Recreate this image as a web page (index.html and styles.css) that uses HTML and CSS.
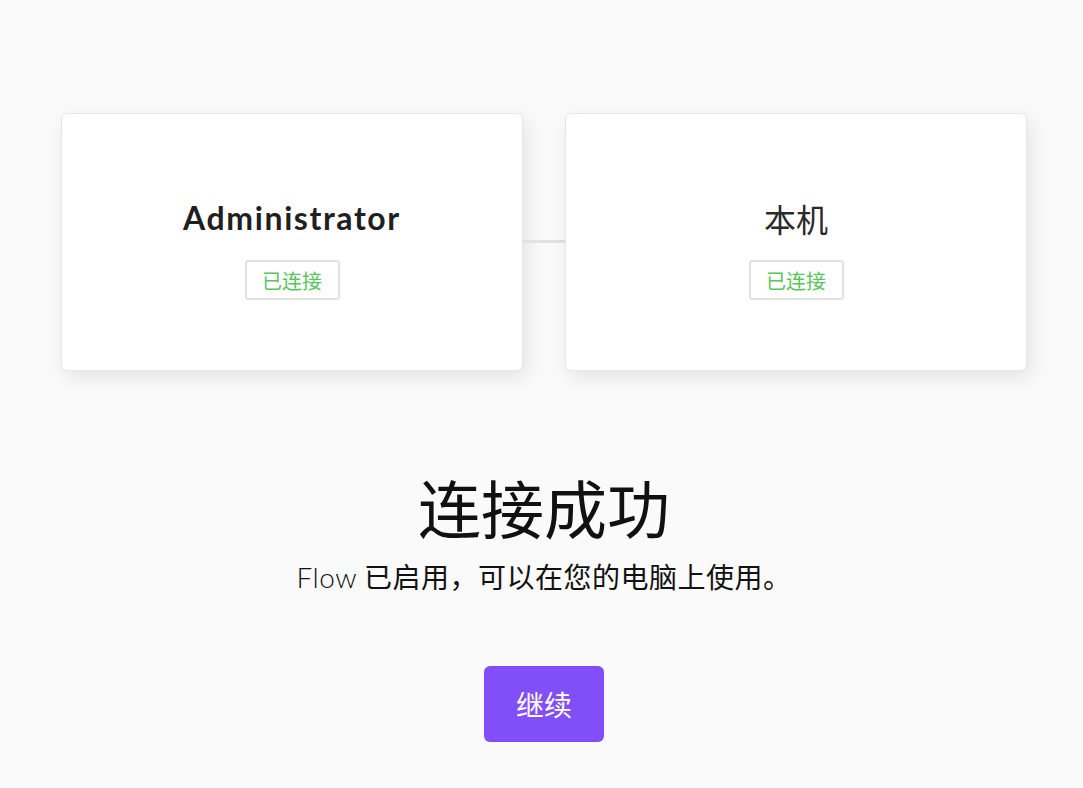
FILE: index.html
```html
<!DOCTYPE html>
<html lang="zh-CN">
<head>
  <meta charset="UTF-8" />
  <meta name="viewport" content="width=device-width, initial-scale=1.0"/>
  <title>Flow</title>
  <link rel="stylesheet" href="styles.css">
</head>
<body>
  <main class="page">
    <section class="devices">
      <div class="device-card">
        <div class="device-name latin">Administrator</div>
        <div class="status">已连接</div>
      </div>
      <div class="link-line"></div>
      <div class="device-card">
        <div class="device-name">本机</div>
        <div class="status">已连接</div>
      </div>
    </section>

    <section class="result">
      <h1 class="result-title">连接成功</h1>
      <p class="result-text"><span class="latin-light">Flow</span> 已启用，可以在您的电脑上使用。</p>
      <button class="btn-continue">继续</button>
    </section>
  </main>
</body>
</html>
```

FILE: styles.css
```css
:root {
  --bg-color: #fafafa;
  --card-border: #e6e6e6;
  --text-color: #222;
  --green: #5ac55a;
  --purple: #814ef7;
}

* {
  margin: 0;
  padding: 0;
  box-sizing: border-box;
}

body {
  background: var(--bg-color);
  color: var(--text-color);
  font-family: "Noto Sans CJK SC", "Noto Sans", sans-serif;
}

.page {
  padding: 113px 56px 0 61px;
}

.devices {
  display: flex;
}

.device-card {
  width: 462px;
  height: 258px;
  background: #fff;
  border: 1px solid var(--card-border);
  border-radius: 6px;
  box-shadow: 4px 7px 20px rgba(0, 0, 0, 0.09);
  display: flex;
  flex-direction: column;
  align-items: center;
  padding-top: 85px;
}

.device-name {
  font-size: 32px;
  line-height: 38px;
  color: #2a2a2a;
  font-weight: 400;
}

.device-name.latin {
  font-family: Lato, "Noto Sans", sans-serif;
  font-weight: 700;
  letter-spacing: 1.6px;
  color: #1f1f1f;
}

.status {
  margin-top: 23px;
  width: 95px;
  height: 40px;
  border: 2px solid #e2e2e2;
  border-radius: 3px;
  color: var(--green);
  font-size: 20px;
  display: flex;
  align-items: center;
  justify-content: center;
}

.link-line {
  width: 42px;
  height: 3px;
  background: #e2e2e2;
  align-self: center;
  margin-top: -2px;
}

.result {
  display: flex;
  flex-direction: column;
  align-items: center;
}

.result-title {
  margin-top: 96px;
  font-size: 63px;
  line-height: 77px;
  font-weight: 400;
  color: #111;
}

.result-text {
  margin-top: 14px;
  font-size: 28px;
  line-height: 36px;
  letter-spacing: 0.5px;
  color: #111;
}

.latin-light {
  font-family: Lato, "Noto Sans", sans-serif;
  font-weight: 300;
}

.btn-continue {
  margin-top: 71px;
  width: 120px;
  height: 76px;
  border: none;
  border-radius: 6px;
  background: var(--purple);
  color: #fff;
  font-family: "Noto Sans CJK SC", sans-serif;
  font-size: 28px;
  cursor: pointer;
}
```
